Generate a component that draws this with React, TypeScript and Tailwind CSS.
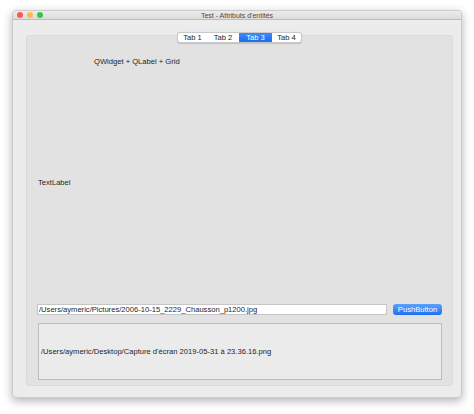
export default function App() {
  const tabs = [
    { label: "Tab 1", w: "w-[29px]" },
    { label: "Tab 2", w: "w-[32px]" },
    { label: "Tab 3", w: "w-[33px]" },
    { label: "Tab 4", w: "w-[29px]" },
  ];
  return (
    <div className="w-[474px] h-[414px] bg-white pt-[10px] pl-[12px] font-['Liberation_Sans',Arial,sans-serif] text-[7.6px] text-[#1e1e1e]">
      <div className="w-[450px] h-[388px] rounded-[4px] bg-[#ececec] shadow-[0_3px_10px_rgba(0,0,0,0.3)] border border-[#cbcbcb] flex flex-col overflow-hidden">
        <div className="h-[9px] shrink-0 relative flex items-center justify-center bg-gradient-to-b from-[#ececec] to-[#dcdcdc] border-b border-[#bcbcbc]">
          <div className="absolute left-[4px] top-[1px] flex gap-[4px]">
            <div className="w-[6px] h-[6px] rounded-full bg-[#fc5753]" />
            <div className="w-[6px] h-[6px] rounded-full bg-[#fdbc40]" />
            <div className="w-[6px] h-[6px] rounded-full bg-[#33c748]" />
          </div>
          <span className="text-[7px] text-[#4a4a4a] leading-none">Test - Attributs d'entités</span>
        </div>
        <div className="flex-1 pt-[15px] pl-[13px] pr-[8px] pb-[11px] flex flex-col">
          <div className="flex-1 bg-[#e2e2e2] border border-[#dadada] rounded-[3px] relative flex flex-col pl-[10px] pt-[22px] pb-[5px]">
            <div className="absolute -top-[4px] left-0 right-0 flex justify-center">
              <div className="flex bg-white border border-[#c9c9c9] rounded-[3px] shadow-[0_0.5px_1px_rgba(0,0,0,0.15)] h-[11px] overflow-hidden">
                {tabs.map((t, i) => (
                  <div
                    key={t.label}
                    className={
                      i === 2
                        ? `${t.w} flex items-center justify-center bg-gradient-to-b from-[#3d8cf8] to-[#1a6cf0] text-white leading-none`
                        : `${t.w} flex items-center justify-center text-[#222] leading-none`
                    }
                  >
                    {t.label}
                  </div>
                ))}
              </div>
            </div>
            <div className="pl-[57px] h-[8px] leading-[8px]">QWidget + QLabel + Grid</div>
            <div className="flex-1 flex items-center pb-[4px] pl-[1px] leading-none">TextLabel</div>
            <div className="flex items-center gap-[6px]">
              <div className="w-[350px] h-[11px] bg-white border border-[#c6c6c6] flex items-center px-[1px] leading-none">
                /Users/aymeric/Pictures/2006-10-15_2229_Chausson_p1200.jpg
              </div>
              <div className="w-[49px] h-[11px] rounded-[3px] bg-gradient-to-b from-[#5aa2fb] to-[#1f6ff2] text-white flex items-center justify-center leading-none">
                PushButton
              </div>
            </div>
            <div className="mt-[8px] ml-[1px] w-[404px] h-[57px] bg-[#ebebeb] border border-[#bdbdbd] flex items-center px-[2px] leading-none">
              /Users/aymeric/Desktop/Capture d'écran 2019-05-31 à 23.36.16.png
            </div>
          </div>
        </div>
      </div>
    </div>
  );
}
